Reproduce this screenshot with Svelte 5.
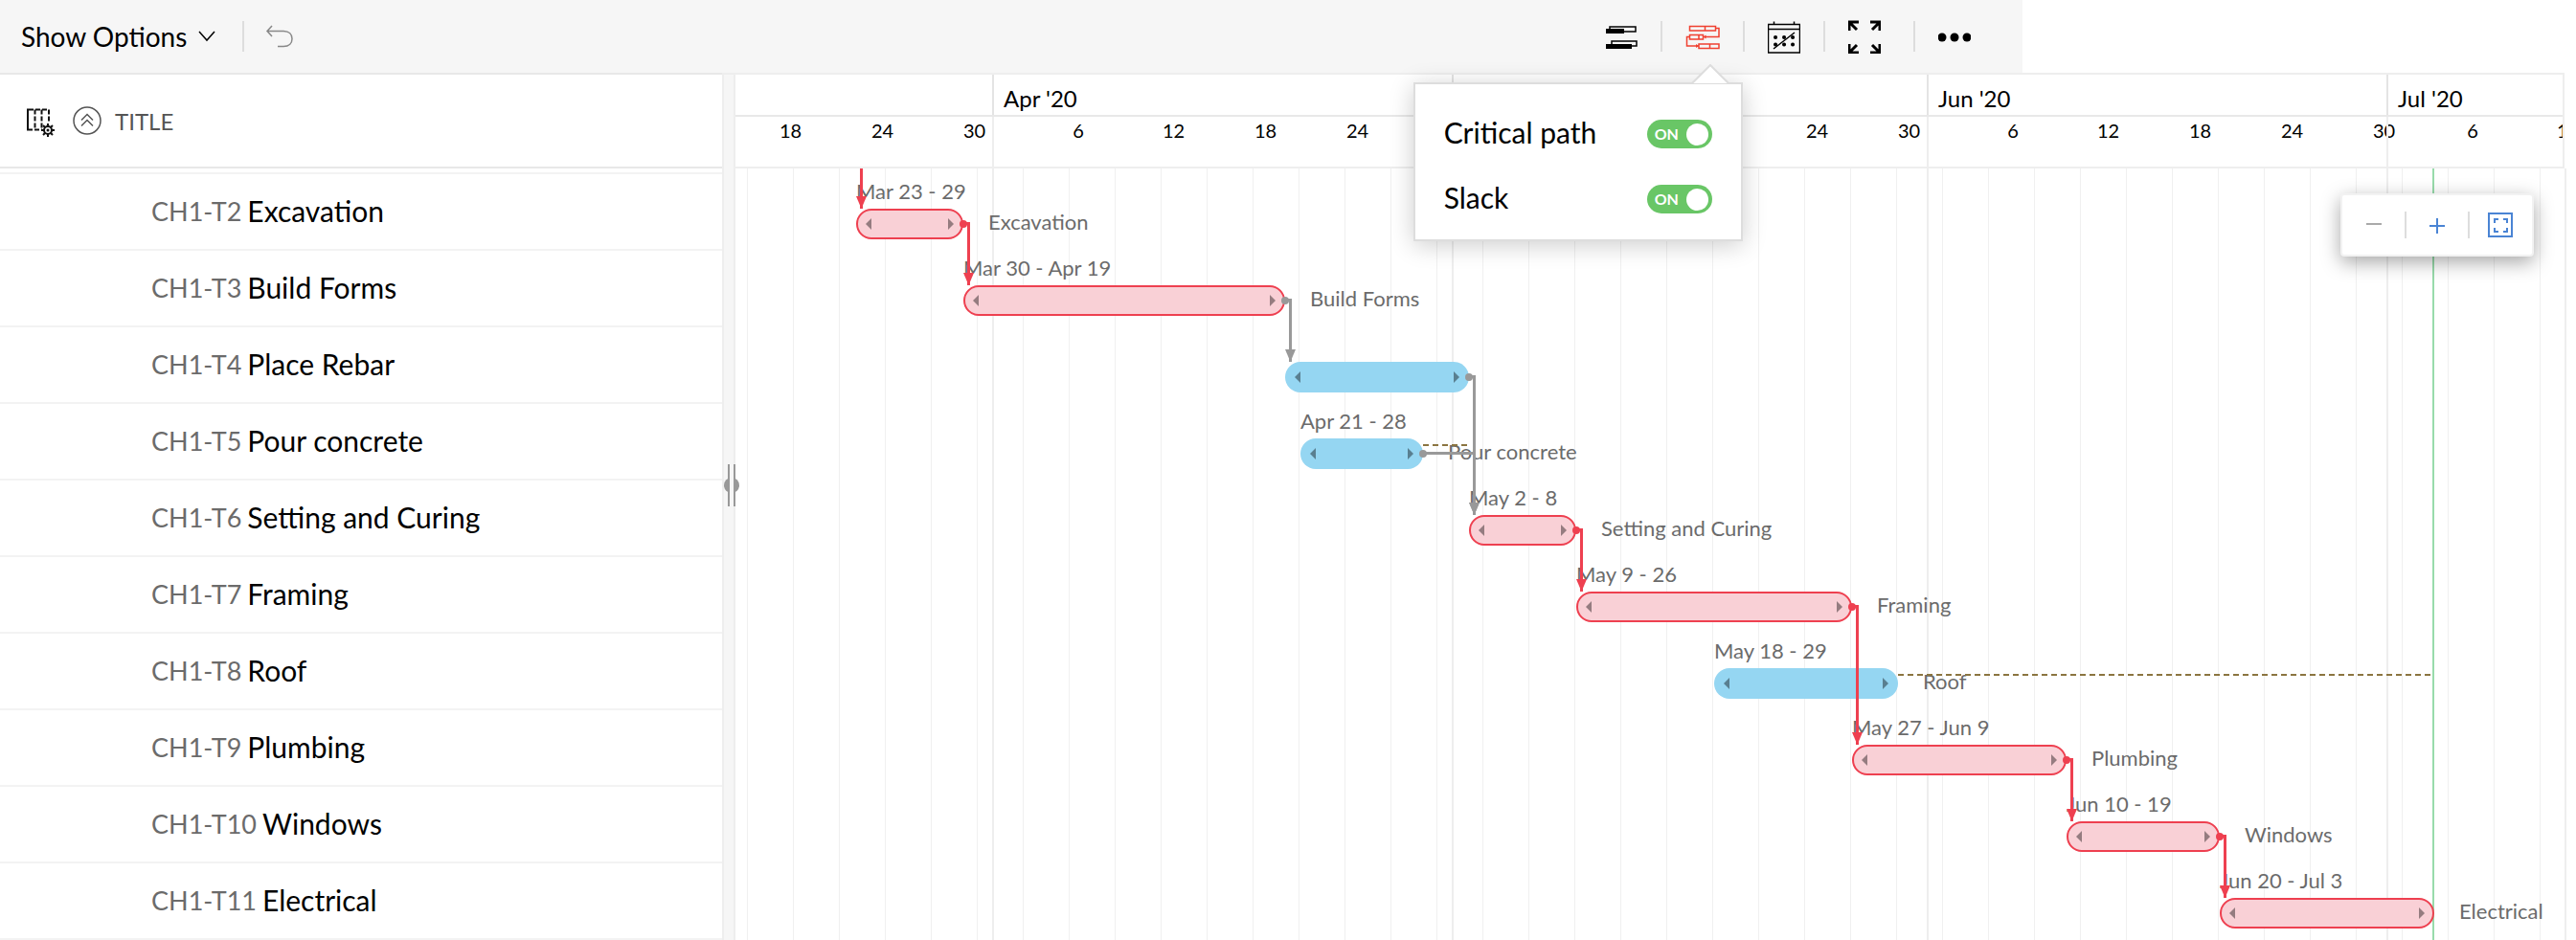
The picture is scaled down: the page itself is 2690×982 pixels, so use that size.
<script lang="ts">
	interface Task {
		id: string
		title: string
		start: number
		days: number
		critical?: boolean
		dates?: string
		slack?: number
	}

	// Day numbers count from Mar 1, 2020
	const MONTHS = [
		{ label: "Apr '20", day: 32 },
		{ label: "May '20", day: 62 },
		{ label: "Jun '20", day: 93 },
		{ label: "Jul '20", day: 123 },
	]

	const TICKS = [
		{ label: '18', day: 18 },
		{ label: '24', day: 24 },
		{ label: '30', day: 30 },
		{ label: '6', day: 37 },
		{ label: '12', day: 43 },
		{ label: '18', day: 49 },
		{ label: '24', day: 55 },
		{ label: '30', day: 61 },
		{ label: '6', day: 67 },
		{ label: '12', day: 73 },
		{ label: '18', day: 79 },
		{ label: '24', day: 85 },
		{ label: '30', day: 91 },
		{ label: '6', day: 98 },
		{ label: '12', day: 104 },
		{ label: '18', day: 110 },
		{ label: '24', day: 116 },
		{ label: '30', day: 122 },
		{ label: '6', day: 128 },
		{ label: '12', day: 134 },
	]

	const tasks: Task[] = [
		{ id: 'CH1-T2', title: 'Excavation', start: 23, days: 7, critical: true, dates: 'Mar 23 - 29' },
		{ id: 'CH1-T3', title: 'Build Forms', start: 30, days: 21, critical: true, dates: 'Mar 30 - Apr 19' },
		{ id: 'CH1-T4', title: 'Place Rebar', start: 51, days: 12 },
		{ id: 'CH1-T5', title: 'Pour concrete', start: 52, days: 8, dates: 'Apr 21 - 28', slack: 3 },
		{ id: 'CH1-T6', title: 'Setting and Curing', start: 63, days: 7, critical: true, dates: 'May 2 - 8' },
		{ id: 'CH1-T7', title: 'Framing', start: 70, days: 18, critical: true, dates: 'May 9 - 26' },
		{ id: 'CH1-T8', title: 'Roof', start: 79, days: 12, dates: 'May 18 - 29', slack: 35 },
		{ id: 'CH1-T9', title: 'Plumbing', start: 88, days: 14, critical: true, dates: 'May 27 - Jun 9' },
		{ id: 'CH1-T10', title: 'Windows', start: 102, days: 10, critical: true, dates: 'Jun 10 - 19' },
		{ id: 'CH1-T11', title: 'Electrical', start: 112, days: 14, critical: true, dates: 'Jun 20 - Jul 3' },
	]

	const links = [
		{ from: 0, to: 1, critical: true },
		{ from: 1, to: 2, critical: false },
		{ from: 2, to: 4, critical: false },
		{ from: 3, to: 4, critical: false },
		{ from: 4, to: 5, critical: true },
		{ from: 5, to: 7, critical: true },
		{ from: 7, to: 8, critical: true },
		{ from: 8, to: 9, critical: true },
	]

	const DAY = 16
	const ROW = 80
	const END_DAY = 126

	const x = (day: number) => 126 + (day - 23) * DAY
	const barTop = (row: number) => 42 + row * ROW
	const end = (task: Task) => x(task.start + task.days)

	let criticalPath = $state(true)
	let slack = $state(true)
	let panelWidth = $state(754)
	let dragging = $state(false)

	function onDrag(e: PointerEvent) {
		if (dragging) panelWidth = Math.max(240, e.clientX)
	}
</script>

<svelte:window onpointermove={onDrag} onpointerup={() => (dragging = false)} />

<div class="app">
	<header class="toolbar">
		<button class="options">
			Show Options
			<svg width="18" height="12" viewBox="0 0 18 12"><path d="M1 1L9 10L17 1" /></svg>
		</button>
		<span class="sep"></span>
		<button class="undo" aria-label="Undo">
			<svg width="30" height="24" viewBox="0 0 30 24">
				<path d="M7 1L2 6.500L7 12M2 6.500H19C25 6.500 28 10 28 14.500S25 22.500 19 22.500H13" />
			</svg>
		</button>

		<div class="tools">
			<button class="tool" aria-label="Baseline">
				<svg width="36" height="36" viewBox="0 0 36 36">
					<rect x="7" y="8" width="27" height="5" />
					<rect class="solid" x="3" y="10" width="19" height="5" />
					<rect x="9" y="23" width="26" height="5" />
					<rect class="solid" x="3" y="26" width="27" height="5" />
				</svg>
			</button>
			<span class="sep"></span>
			<div class="anchor">
				<button class="tool active" aria-label="Critical path and slack" aria-expanded="true">
					<svg width="36" height="36" viewBox="0 0 36 36">
						<path d="M4.500 7.500h27v4.500h-27zM20.500 7.500v4.500M31.500 9.500h3.500v9H20M4.500 16.500h14v4.500h-14zM14 16.500v4.500M4.500 18.500H1.500v9.500h12M14 26h21v4.500H14zM25.500 26v4.500" />
						<path class="tip" d="M18.500 18.500l3-2v4zM14 28l-3-2v4z" />
					</svg>
				</button>
				<div class="popover">
					<svg class="arrow" width="40" height="21" viewBox="0 0 40 21">
						<path d="M1 20L20 1L39 20" />
					</svg>
					<label>
						Critical path
						<input type="checkbox" bind:checked={criticalPath} />
						<span class="switch">{criticalPath ? 'ON' : 'OFF'}</span>
					</label>
					<label>
						Slack
						<input type="checkbox" bind:checked={slack} />
						<span class="switch">{slack ? 'ON' : 'OFF'}</span>
					</label>
				</div>
			</div>
			<span class="sep"></span>
			<button class="tool" aria-label="Calendar">
				<svg width="34" height="36" viewBox="0 0 34 36">
					<path d="M0.500 5.500h33v29.500h-33zM0.500 10.500h33M6.500 2.500v3M27.500 2.500v3M6 31L28 14" />
					<path class="dots" d="M8 19h.1M17 19h.1M26 19h.1M8 26.500h.1M17 26.500h.1M26 26.500h.1" />
				</svg>
			</button>
			<span class="sep"></span>
			<button class="tool full" aria-label="Full screen">
				<svg width="34" height="36" viewBox="0 0 34 36">
					<path d="M1 12V3h10M1.500 3.500L9 11M23 3h10v9M32.500 3.500L25 11M1 26v9h10M1.500 34.500L9 27M33 26v9H23M32.500 34.500L25 27" />
				</svg>
			</button>
			<span class="sep"></span>
			<button class="tool" aria-label="More">
				<svg width="34" height="36" viewBox="0 0 34 36">
					<g class="solid"><circle cx="4" cy="19" r="4.500" /><circle cx="17" cy="19" r="4.500" /><circle cx="30" cy="19" r="4.500" /></g>
				</svg>
			</button>
		</div>
	</header>

	<main>
		<section class="list" style:width="{panelWidth}px">
			<div class="list-head">
				<button class="tool columns" aria-label="Column settings">
					<svg width="34" height="34" viewBox="0 0 34 34">
						<path d="M8 5.500H2v21h5" />
						<path class="dashed" d="M9.500 5.500v21M16.500 5.500v21M10 5.500h14v13M9 26.500h8" />
						<circle cx="23" cy="27" r="4" />
						<circle class="solid" cx="23" cy="27" r="1.500" />
						<path d="M23 23v-3M23 34v-3M19 27h-3M30 27h-3M20 24l-2-2M28 32l-2-2M20 30l-2 2M28 22l-2 2" />
					</svg>
				</button>
				<button class="tool collapse" aria-label="Collapse all">
					<svg width="30" height="30" viewBox="0 0 30 30">
						<circle cx="15" cy="15" r="14" />
						<path d="M9 14.500L15 8.500L21 14.500M9 20.500L15 14.500L21 20.500" />
					</svg>
				</button>
				<span>TITLE</span>
			</div>
			<ul>
				{#each tasks as task (task.id)}
					<li><span class="code">{task.id}</span><span>{task.title}</span></li>
				{/each}
			</ul>
		</section>

		<button class="splitter" aria-label="Resize columns" onpointerdown={() => (dragging = true)}>
			<svg width="18" height="44" viewBox="0 0 18 44">
				<circle cx="9" cy="22" r="8" />
				<path class="gap" d="M9 0v44" />
				<path d="M6 0v44M12 0v44" />
			</svg>
		</button>

		<section class="chart">
			<div class="scale">
				<div class="months">
					{#each MONTHS as month}
						<span style:left="{x(month.day) - 2}px">{month.label}</span>
					{/each}
				</div>
				<div class="days">
					{#each TICKS as tick}
						<span style:left="{x(tick.day)}px">{tick.label}</span>
					{/each}
					{#each MONTHS as month}
						<i style:left="{x(month.day) - 2}px"></i>
					{/each}
				</div>
			</div>

			<div class="canvas">
				{#each MONTHS as month}
					<i class="month-line" style:left="{x(month.day) - 2}px"></i>
				{/each}
				<i class="end-line" style:left="{x(END_DAY) - 2}px"></i>

				{#each tasks as task, row (task.id)}
					{#if task.dates}
						<span class="dates" style:left="{x(task.start)}px" style:top="{barTop(row) - 32}px">{task.dates}</span>
						<span class="name" style:left="{end(task) + 26}px" style:top="{barTop(row)}px">{task.title}</span>
					{/if}
					<div
						class="bar"
						class:critical={task.critical && criticalPath}
						style:left="{x(task.start)}px"
						style:top="{barTop(row)}px"
						style:width="{task.days * DAY}px"
					>
						<svg width="6" height="12" viewBox="0 0 6 12"><path d="M6 0v12L0 6z" /></svg>
						<svg width="6" height="12" viewBox="0 0 6 12"><path d="M0 0v12L6 6z" /></svg>
					</div>
				{/each}

				<svg class="links" width="100%" height="100%">
					<g class:critical={criticalPath}>
						<path d="M{x(23) + 5.5} 0V{barTop(0)}" />
						<polygon points="{x(23)},{barTop(0) - 13} {x(23) + 11},{barTop(0) - 13} {x(23) + 5.5},{barTop(0)}" />
					</g>
					{#each links as link}
						{@const x1 = end(tasks[link.from])}
						{@const x2 = x(tasks[link.to].start)}
						{@const y1 = barTop(link.from) + 16}
						{@const y2 = barTop(link.to)}
						<g class:critical={link.critical && criticalPath}>
							<circle cx={x1} cy={y1} r="4" />
							<path d="M{x1} {y1 - 0.5}H{x2 + 5.5}V{y2}" />
							<polygon points="{x2},{y2 - 13} {x2 + 11},{y2 - 13} {x2 + 5.5},{y2}" />
						</g>
					{/each}
					{#if slack}
						{#each tasks as task, row}
							{#if task.slack}
								<path class="slack" d="M{end(task)} {barTop(row) + 7}h{task.slack * DAY}" />
							{/if}
						{/each}
					{/if}
				</svg>

				<div class="zoom">
					<button aria-label="Zoom out" disabled>
						<svg width="26" height="26" viewBox="0 0 26 26"><path d="M5 12h16" /></svg>
					</button>
					<span class="sep"></span>
					<button aria-label="Zoom in">
						<svg width="26" height="26" viewBox="0 0 26 26"><path d="M5 14h16M13 6v16" /></svg>
					</button>
					<span class="sep"></span>
					<button aria-label="Fit to screen">
						<svg width="26" height="26" viewBox="0 0 26 26">
							<path d="M1 1h24v24H1zM7 11V7h4M16 7h4v4M20 16v4h-4M11 20H7v-4" />
						</svg>
					</button>
				</div>
			</div>
		</section>
	</main>
</div>

<style>
	:global(body) {
		margin: 0;
		background: #fff;
	}

	.app {
		font-family: Lato, 'Liberation Sans', sans-serif;
		color: #000;
		overflow: hidden;
	}

	button {
		display: flex;
		align-items: center;
		margin: 0;
		padding: 0;
		border: 0;
		background: none;
		color: inherit;
		font: inherit;
		cursor: pointer;
	}

	svg {
		display: block;
		fill: none;
		stroke: currentColor;
		stroke-width: 1.5;
	}

	.solid,
	.tip {
		fill: currentColor;
		stroke: none;
	}

	.sep {
		flex: none;
		width: 2px;
		height: 32px;
		background: #ddd;
	}

	.toolbar {
		position: relative;
		z-index: 2;
		display: flex;
		align-items: center;
		width: 78.5%;
		height: 76px;
		box-sizing: border-box;
		padding: 0 54px 0 22px;
		background: #f6f6f6;
	}

	.options {
		gap: 12px;
		margin-right: 28px;
		font-size: 28px;
		white-space: nowrap;
	}

	.undo {
		margin-left: 22px;
		color: #888;
	}

	.tools {
		display: flex;
		align-items: center;
		align-self: stretch;
		gap: 24px;
		margin-left: auto;
	}

	.full {
		margin-right: 10px;
	}

	.full svg {
		stroke-width: 3;
	}

	.active {
		color: #f04030;
	}

	.dots {
		stroke-width: 4;
		stroke-linecap: round;
	}

	.anchor {
		position: relative;
		display: flex;
		align-items: center;
		align-self: stretch;
	}

	.popover {
		position: absolute;
		top: calc(100% + 10px);
		right: -24px;
		display: flex;
		flex-direction: column;
		gap: 32px;
		width: 344px;
		box-sizing: border-box;
		padding: 32px 30px 26px;
		border: 2px solid #ddd;
		background: #fff;
		box-shadow: 0 4px 24px rgba(0, 0, 0, 0.2);
	}

	.arrow {
		position: absolute;
		top: -21px;
		right: 12px;
		fill: #fff;
		stroke: #ddd;
		stroke-width: 2;
	}

	.popover label {
		display: flex;
		align-items: center;
		justify-content: space-between;
		font-size: 30px;
		line-height: 36px;
	}

	.popover input {
		position: absolute;
		opacity: 0;
	}

	.switch {
		display: flex;
		align-items: center;
		justify-content: space-between;
		width: 68px;
		height: 30px;
		box-sizing: border-box;
		margin-top: 4px;
		padding: 0 4px 0 8px;
		border-radius: 15px;
		background: #aaa;
		color: #fff;
		font-size: 16px;
		font-weight: bold;
	}

	.switch::after {
		content: '';
		width: 23px;
		height: 23px;
		border-radius: 50%;
		background: #fff;
	}

	input:checked + .switch {
		background: #69c666;
	}

	main {
		display: flex;
		padding-right: 10px;
	}

	.list {
		flex: none;
	}

	.list-head {
		display: flex;
		align-items: center;
		height: 96px;
		padding-left: 27px;
		border-top: 2px solid #e8e8e8;
		border-bottom: 2px solid #e8e8e8;
		color: #555;
		font-size: 24px;
	}

	.columns {
		color: #111;
	}

	.columns svg {
		stroke-width: 2;
	}

	.collapse {
		margin: 0 14px 0 15px;
	}

	.dashed {
		stroke-dasharray: 5 2;
	}

	ul {
		margin: 4px 0 0;
		padding: 0;
		border-top: 2px solid #f3f3f3;
		list-style: none;
	}

	li {
		display: flex;
		align-items: center;
		gap: 6px;
		height: 76px;
		padding: 0 0 2px 158px;
		border-bottom: 2px solid #f3f3f3;
		font-size: 30px;
		white-space: nowrap;
	}

	.code {
		color: #6b6b6b;
		font-size: 27px;
	}

	.splitter {
		position: relative;
		z-index: 1;
		flex: none;
		width: 14px;
		box-sizing: border-box;
		border: 2px solid #eee;
		border-width: 2px 2px 0;
		background: #f6f6f6;
		color: #999;
		cursor: col-resize;
	}

	.splitter svg {
		position: absolute;
		top: 45%;
		left: -1px;
		stroke-width: 2;
	}

	.splitter circle {
		fill: currentColor;
		stroke: none;
	}

	.splitter .gap {
		stroke: #f6f6f6;
		stroke-width: 5;
	}

	.chart {
		display: flex;
		flex: 1;
		flex-direction: column;
		min-width: 0;
	}

	.scale {
		margin-right: 2px;
		border: 2px solid #eee;
		border-left: 0;
		overflow: hidden;
	}

	.months,
	.days {
		position: relative;
		height: 42px;
	}

	.months {
		border-bottom: 2px solid #e8e8e8;
	}

	.days {
		height: 52px;
	}

	.months span {
		position: absolute;
		height: 42px;
		padding-left: 10px;
		border-left: 2px solid #e4e4e4;
		font-size: 24px;
		line-height: 50px;
		white-space: nowrap;
	}

	.days i,
	.month-line {
		position: absolute;
		top: 0;
		bottom: 0;
		width: 2px;
		background: #eee;
	}

	.days span {
		position: absolute;
		top: 2px;
		width: 16px;
		font-size: 20px;
		line-height: 24px;
		text-align: center;
	}

	.canvas {
		position: relative;
		flex: 1;
		border-right: 2px solid #eee;
		background: repeating-linear-gradient(to right, #f0f0f0 0 1px, transparent 1px 48px) 12px 0;
		overflow: hidden;
	}

	.end-line {
		position: absolute;
		top: 0;
		bottom: 0;
		width: 2px;
		background: #98dbab;
	}

	.dates,
	.name {
		position: absolute;
		color: #6b6b6b;
		font-size: 22px;
		line-height: 28px;
		white-space: nowrap;
	}

	.bar {
		position: absolute;
		display: flex;
		align-items: center;
		justify-content: space-between;
		height: 32px;
		box-sizing: border-box;
		padding: 0 10px;
		border-radius: 16px;
		background: #95d6f2;
	}

	.bar svg {
		fill: #597f90;
		stroke: none;
	}

	.bar.critical {
		padding: 0 8px;
		border: 2px solid #ee4050;
		background: #f9d0d6;
	}

	.bar.critical svg {
		fill: #957c80;
	}

	.links {
		position: absolute;
		inset: 0;
		color: #999;
		stroke-width: 3;
		pointer-events: none;
	}

	.links .critical {
		color: #ee4050;
	}

	.links g {
		stroke: currentColor;
	}

	.links circle,
	.links polygon {
		fill: currentColor;
		stroke: none;
	}

	.links .slack {
		stroke: #8b7540;
		stroke-width: 2;
		stroke-dasharray: 6 4;
	}

	.zoom {
		position: absolute;
		top: 26px;
		right: 32px;
		display: flex;
		align-items: center;
		gap: 19px;
		padding: 17px 20px;
		border: 2px solid #f2f2f2;
		border-radius: 4px;
		background: #fff;
		color: #4a84d4;
		box-shadow: 0 6px 20px rgba(0, 0, 0, 0.35);
	}

	.zoom svg {
		stroke-width: 2;
	}

	.zoom button:disabled {
		color: #aaa;
	}

	.zoom .sep {
		height: 28px;
	}
</style>
